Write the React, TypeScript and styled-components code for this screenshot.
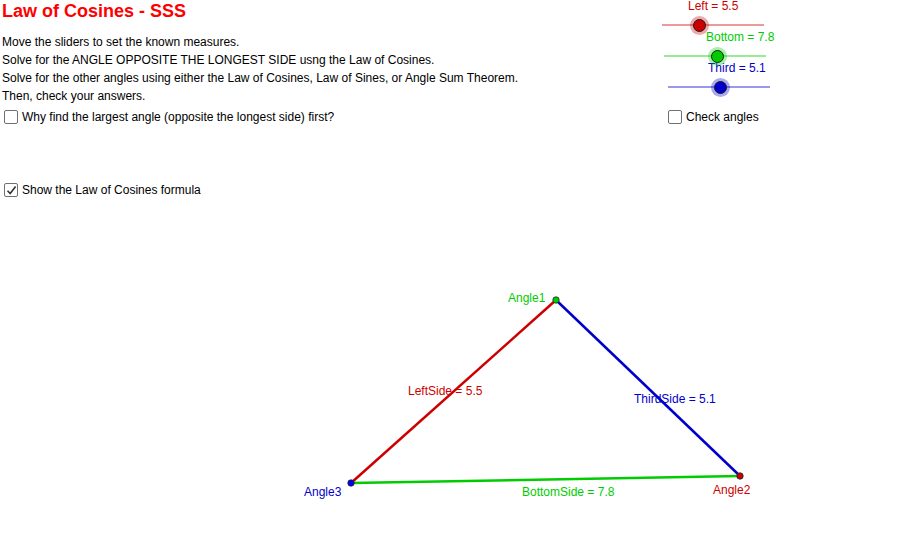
import React from 'react';
import styled, { createGlobalStyle } from 'styled-components';

const GlobalStyle = createGlobalStyle`
  html, body {
    margin: 0;
    padding: 0;
    background: #fff;
  }
  body {
    font-family: "Liberation Sans", Arial, sans-serif;
    color: #000;
  }
`;

const RED = '#cc0000';
const GREEN = '#00cc00';
const BLUE = '#0000cc';

const Applet = styled.div`
  width: 907px;
  height: 557px;
  overflow: hidden;
  display: flex;
  flex-direction: column;
`;

const Top = styled.div`
  height: 200px;
  display: grid;
  grid-template-columns: 658px 1fr;
`;

const InfoColumn = styled.div`
  padding-left: 2px;
  display: flex;
  flex-direction: column;
`;

const Title = styled.h1`
  margin: 0;
  font-size: 18px;
  line-height: 22px;
  font-weight: bold;
  color: #ff0000;
`;

const Instructions = styled.div`
  margin-top: 11px;
  font-size: 12px;
  line-height: 18px;
`;

const CheckRow = styled.label<{ $top: number; $indent?: number }>`
  display: flex;
  align-items: center;
  gap: 4px;
  margin-top: ${(p) => p.$top}px;
  margin-left: ${(p) => p.$indent ?? 2}px;
  font-size: 12px;
  line-height: 14px;
  cursor: pointer;
`;

const Box = styled.span`
  width: 12px;
  height: 12px;
  border: 1px solid #707070;
  border-radius: 2px;
  background: #fff;
  display: flex;
  align-items: center;
  justify-content: center;
`;

const ControlColumn = styled.div`
  display: flex;
  flex-direction: column;
`;

const SliderBlock = styled.div`
  height: 31px;
  display: flex;
  flex-direction: column;
`;

const SliderLabel = styled.div<{ $color: string; $x: number }>`
  margin-left: ${(p) => p.$x}px;
  height: 12px;
  font-size: 12px;
  line-height: 13px;
  color: ${(p) => p.$color};
  white-space: nowrap;
`;

const TrackArea = styled.div<{ $x: number }>`
  position: relative;
  margin-left: ${(p) => p.$x}px;
  width: 102px;
  height: 19px;
`;

const Track = styled.div<{ $color: string }>`
  position: absolute;
  left: 0;
  right: 0;
  top: 12px;
  height: 2px;
  background: ${(p) => p.$color};
  opacity: 0.4;
`;

const Thumb = styled.div<{ $color: string; $at: number }>`
  position: absolute;
  top: 13px;
  left: ${(p) => p.$at}px;
  width: 11px;
  height: 11px;
  margin: -6.5px 0 0 -6.5px;
  border-radius: 50%;
  border: 1px solid #1a1a1a;
  background: ${(p) => p.$color};
  box-shadow: 0 0 0 3px ${(p) => p.$color}55;
`;

const Canvas = styled.svg`
  display: block;
  width: 907px;
  height: 357px;
  font-family: "Liberation Sans", Arial, sans-serif;
  font-size: 12px;
`;

function CheckBox({ checked }: { checked?: boolean }) {
  return (
    <Box>
      {checked && (
        <svg width="11" height="11" viewBox="0 0 11 11">
          <path d="M1.5 5.8 L4.2 8.6 L9.6 1.6" fill="none" stroke="#333" strokeWidth="1.6" />
        </svg>
      )}
    </Box>
  );
}

type SliderProps = {
  label: string;
  color: string;
  labelX: number;
  trackX: number;
  at: number;
};

function Slider({ label, color, labelX, trackX, at }: SliderProps) {
  return (
    <SliderBlock>
      <SliderLabel $color={color} $x={labelX}>{label}</SliderLabel>
      <TrackArea $x={trackX}>
        <Track $color={color} />
        <Thumb $color={color} $at={at} />
      </TrackArea>
    </SliderBlock>
  );
}

// triangle vertices in canvas coords (canvas starts at page y=200)
const A1 = { x: 556, y: 100 };
const A2 = { x: 740, y: 276 };
const A3 = { x: 351, y: 283 };

function Triangle() {
  return (
    <Canvas viewBox="0 0 907 357">
      <line x1={A3.x} y1={A3.y} x2={A1.x} y2={A1.y} stroke={RED} strokeWidth="2.5" />
      <line x1={A1.x} y1={A1.y} x2={A2.x} y2={A2.y} stroke={BLUE} strokeWidth="2.5" />
      <line x1={A3.x} y1={A3.y} x2={A2.x} y2={A2.y} stroke={GREEN} strokeWidth="2.5" />

      <circle cx={A1.x} cy={A1.y} r="3.2" fill={GREEN} stroke="#222" strokeWidth="0.8" />
      <circle cx={A2.x} cy={A2.y} r="3.2" fill={RED} stroke="#222" strokeWidth="0.8" />
      <circle cx={A3.x} cy={A3.y} r="3.2" fill="#0000ff" stroke="#222" strokeWidth="0.8" />

      <text x="508" y="102" fill={GREEN}>Angle1</text>
      <text x="713" y="294" fill={RED}>Angle2</text>
      <text x="304" y="296" fill={BLUE}>Angle3</text>
      <text x="408" y="195" fill={RED}>LeftSide = 5.5</text>
      <text x="634" y="203" fill={BLUE}>ThirdSide = 5.1</text>
      <text x="522" y="296" fill={GREEN}>BottomSide = 7.8</text>
    </Canvas>
  );
}

export default function App() {
  return (
    <Applet>
      <GlobalStyle />
      <Top>
        <InfoColumn>
          <Title>Law of Cosines - SSS</Title>
          <Instructions>
            <div>Move the sliders to set the known measures.</div>
            <div>Solve for the ANGLE OPPOSITE THE LONGEST SIDE usng the Law of Cosines.</div>
            <div>Solve for the other angles using either the Law of Cosines, Law of Sines, or Angle Sum Theorem.</div>
            <div>Then, check your answers.</div>
          </Instructions>
          <CheckRow $top={5}>
            <CheckBox />
            Why find the largest angle (opposite the longest side) first?
          </CheckRow>
          <CheckRow $top={59}>
            <CheckBox checked />
            Show the Law of Cosines formula
          </CheckRow>
        </InfoColumn>
        <ControlColumn>
          <Slider label="Left = 5.5" color={RED} labelX={30} trackX={4} at={37} />
          <Slider label="Bottom = 7.8" color={GREEN} labelX={48} trackX={6} at={53} />
          <Slider label="Third = 5.1" color={BLUE} labelX={50} trackX={10} at={52} />
          <CheckRow $top={17} $indent={10}>
            <CheckBox />
            Check angles
          </CheckRow>
        </ControlColumn>
      </Top>
      <Triangle />
    </Applet>
  );
}
